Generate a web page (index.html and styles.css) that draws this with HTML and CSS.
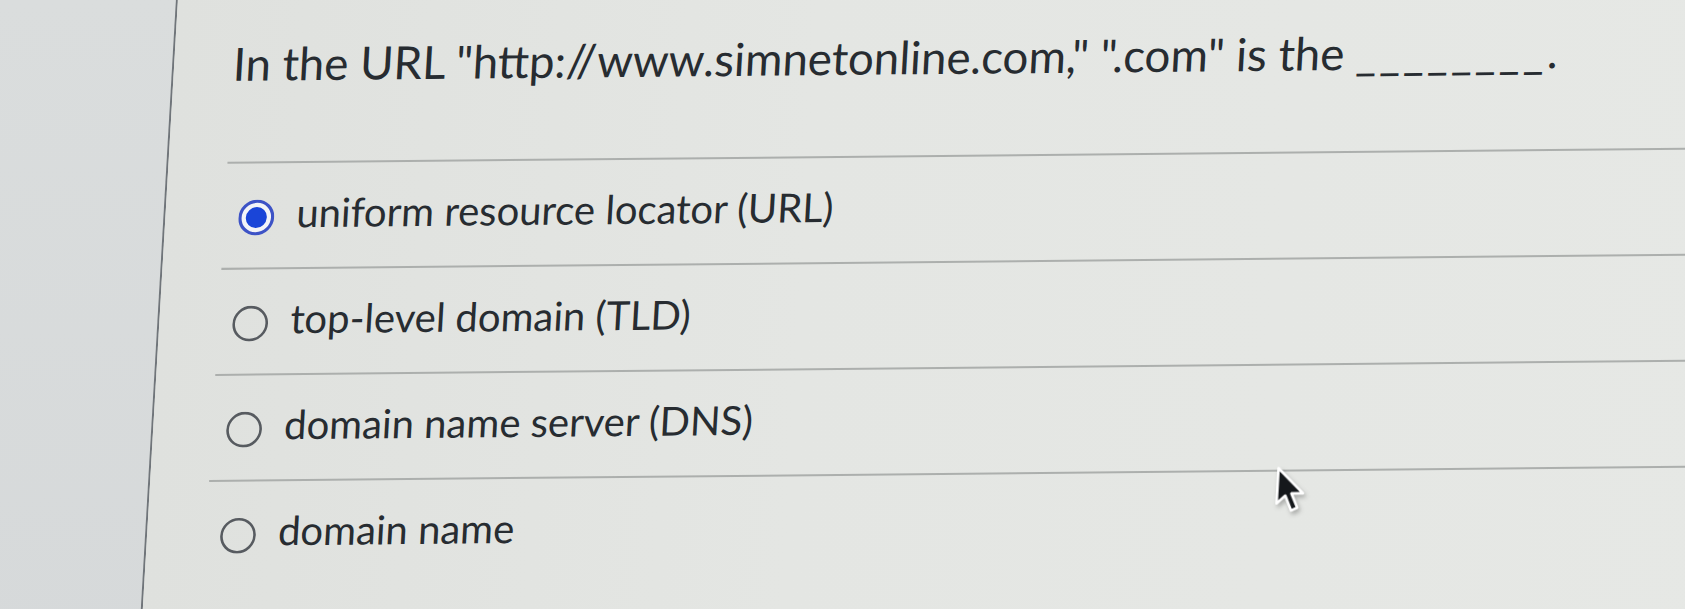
FILE: index.html
```html
<!DOCTYPE html>
<html lang="en">
<head>
<meta charset="utf-8">
<title>Question</title>
<link rel="stylesheet" href="styles.css">
</head>
<body>
<div class="frame">
<div class="screen">
  <aside class="sidebar"></aside>
  <main class="content">
    <div class="question">In the URL "http://www.simnetonline.com," ".com" is the <span class="blank">________</span>.</div>
    <ul class="options">
      <li class="option">
        <svg class="radio" viewBox="0 0 36 36" aria-hidden="true">
          <circle cx="18" cy="18" r="16.3" fill="#f3f4f8" stroke="#3d53c6" stroke-width="3.2"/>
          <circle cx="18" cy="18" r="10.5" fill="#1a45d8"/>
        </svg>
        <span class="label">uniform resource locator (URL)</span>
      </li>
      <li class="option">
        <svg class="radio" viewBox="0 0 36 36" aria-hidden="true">
          <circle cx="18" cy="18" r="16.5" fill="none" stroke="#575b60" stroke-width="2.6"/>
        </svg>
        <span class="label">top-level domain (TLD)</span>
      </li>
      <li class="option">
        <svg class="radio" viewBox="0 0 36 36" aria-hidden="true">
          <circle cx="18" cy="18" r="16.5" fill="none" stroke="#575b60" stroke-width="2.6"/>
        </svg>
        <span class="label">domain name server (DNS)</span>
      </li>
      <li class="option">
        <svg class="radio" viewBox="0 0 36 36" aria-hidden="true">
          <circle cx="18" cy="18" r="16.5" fill="none" stroke="#575b60" stroke-width="2.6"/>
        </svg>
        <span class="label">domain name</span>
      </li>
    </ul>
    <svg class="cursor" viewBox="-3 -3 30 46" aria-hidden="true">
      <path d="M0 0 L0 32 L7.5 25 L13.5 38.5 L19 36 L13 23 L23.5 23 Z" fill="#15181b" stroke="#ffffff" stroke-width="2.4" stroke-linejoin="round"/>
    </svg>
  </main>
</div>
</div>
</body>
</html>
```

FILE: styles.css
```css
html, body {
  margin: 0;
  padding: 0;
  background: #e3e5e2;
}

.frame {
  width: 1685px;
  height: 609px;
  overflow: hidden;
  background: #e4e6e3;
}

.screen {
  display: flex;
  width: 1780px;
  height: 660px;
  transform-origin: 0 0;
  transform: skewY(-0.55deg) skewX(-3.3deg);
  font-family: "Lato", "Liberation Sans", sans-serif;
  color: #272c31;
}

.sidebar {
  flex: 0 0 176px;
  background: linear-gradient(180deg, #dadddd 0%, #d6d9da 100%);
  border-right: 2px solid #70757a;
}

.content {
  flex: 1;
  position: relative;
  padding: 39px 0 0 59px;
  background: linear-gradient(90deg, #dfe1de 0%, #e4e6e3 40%, #e6e8e5 100%);
}

.question {
  font-size: 45.6px;
  line-height: 54px;
  height: 54px;
  margin-bottom: 71px;
  white-space: nowrap;
}

.blank {
  letter-spacing: 3px;
}

.options {
  list-style: none;
  margin: 0;
  padding: 0;
}

.option {
  display: flex;
  align-items: flex-start;
  gap: 22px;
  height: 104px;
  padding: 0 0 0 14px;
  border-top: 2px solid #acafad;
}

.radio {
  flex: 0 0 36px;
  width: 36px;
  height: 36px;
  margin-top: 36px;
}

.label {
  margin-top: 25px;
  font-size: 40px;
  line-height: 48px;
  white-space: nowrap;
}

.cursor {
  position: absolute;
  left: 1125px;
  top: 477px;
  width: 33px;
  height: 51px;
  filter: drop-shadow(2px 3px 2px rgba(0, 0, 0, 0.25));
}
```
